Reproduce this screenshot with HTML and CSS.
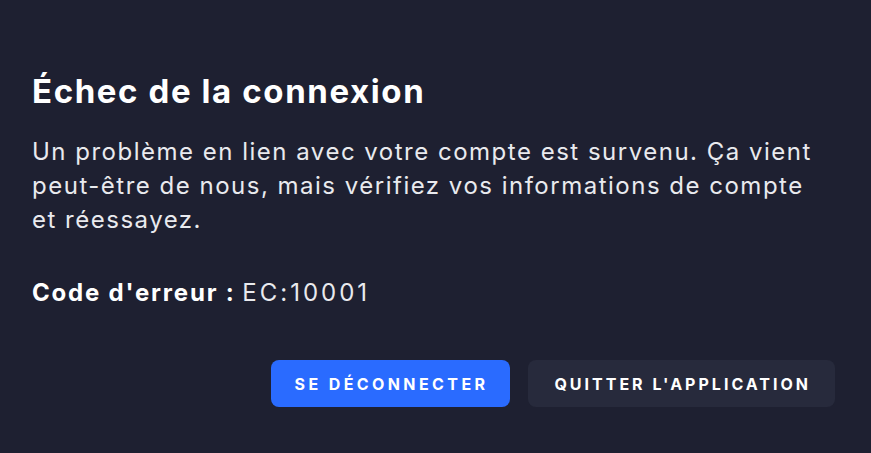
FILE: index.html
```html
<!DOCTYPE html>
<html lang="fr">
<head>
    <meta charset="UTF-8">
    <title>Échec de la connexion</title>
    <link rel="stylesheet" href="styles.css">
</head>
<body>
    <div class="dialog">
        <h1 class="dialog-title">Échec de la connexion</h1>
        <p class="dialog-text">Un problème en lien avec votre compte est survenu. Ça vient peut-être de nous, mais vérifiez vos informations de compte et réessayez.</p>
        <p class="error-code"><strong>Code d'erreur :</strong> <span class="error-value">EC:10001</span></p>
        <div class="dialog-actions">
            <button type="button" class="button button-primary">Se déconnecter</button>
            <button type="button" class="button button-secondary">Quitter l'application</button>
        </div>
    </div>
</body>
</html>
```
FILE: styles.css
```css
body {
    margin: 0;
    background-color: #1e2031;
    font-family: Inter, "Open Sans", sans-serif;
    color: #e9eaee;
}

.dialog {
    padding: 72px 36px 0 32px;
}

.dialog-title {
    margin: 0;
    font-size: 33px;
    line-height: 38px;
    font-weight: 700;
    letter-spacing: 1.6px;
    color: #ffffff;
}

.dialog-text {
    margin: 25px 0 0;
    max-width: 800px;
    font-size: 24px;
    line-height: 34px;
    letter-spacing: 1.5px;
}

.error-code {
    margin: 39px 0 0;
    font-size: 24px;
    line-height: 34px;
}

.error-code strong {
    font-weight: 700;
    color: #ffffff;
    letter-spacing: 1.8px;
}

.error-value {
    letter-spacing: 3px;
}

.dialog-actions {
    display: flex;
    justify-content: flex-end;
    gap: 18px;
    margin-top: 50px;
}

.button {
    height: 47px;
    padding: 0 22px 0 24px;
    border: none;
    border-radius: 8px;
    font-family: inherit;
    font-size: 16px;
    font-weight: 700;
    letter-spacing: 3.4px;
    text-transform: uppercase;
    color: #ffffff;
    cursor: pointer;
}

.button-primary {
    background-color: #2a6bff;
}

.button-secondary {
    background-color: #272a3c;
    letter-spacing: 3px;
    padding: 0 24px 0 26px;
}
```
